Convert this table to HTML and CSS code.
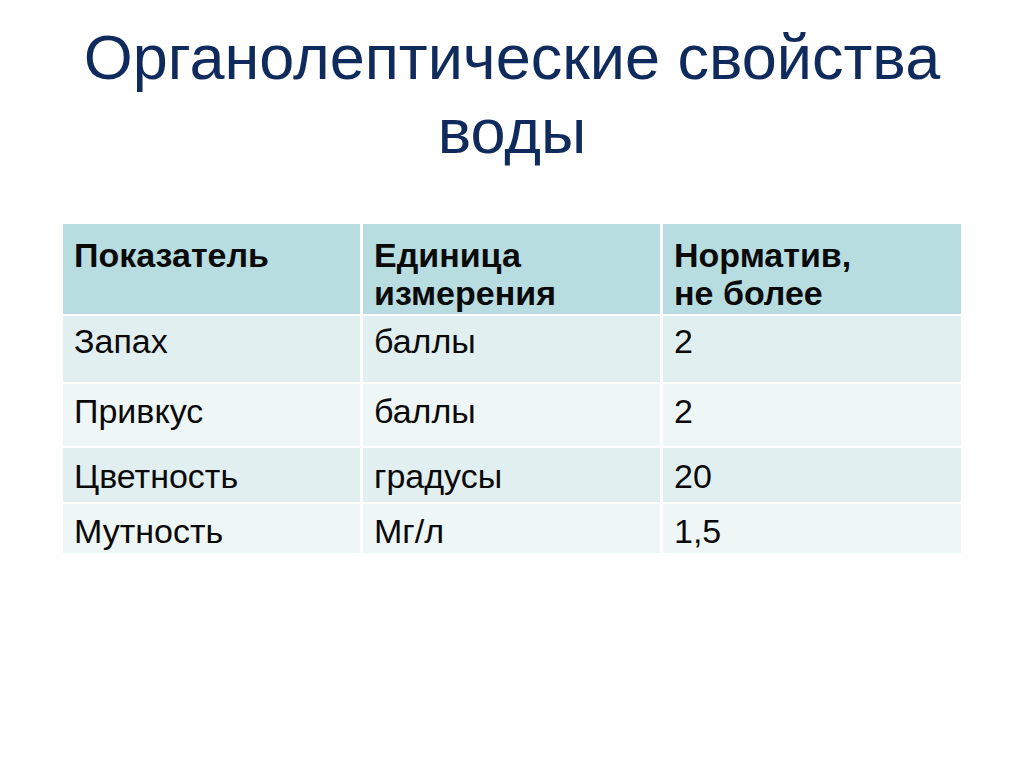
FILE: index.html
```html
<!DOCTYPE html>
<html lang="ru">
<head>
<meta charset="utf-8">
<title>Органолептические свойства воды</title>
<link rel="stylesheet" href="styles.css">
</head>
<body>
<div class="slide">
  <h1 class="title">Органолептические свойства<br>воды</h1>
  <div class="table">
    <div class="cell head">Показатель</div>
    <div class="cell head">Единица<br>измерения</div>
    <div class="cell head">Норматив,<br>не более</div>

    <div class="cell odd r1">Запах</div>
    <div class="cell odd r1">баллы</div>
    <div class="cell odd r1">2</div>

    <div class="cell even r2">Привкус</div>
    <div class="cell even r2">баллы</div>
    <div class="cell even r2">2</div>

    <div class="cell odd r3">Цветность</div>
    <div class="cell odd r3">градусы</div>
    <div class="cell odd r3">20</div>

    <div class="cell even r4">Мутность</div>
    <div class="cell even r4">Мг/л</div>
    <div class="cell even r4">1,5</div>
  </div>
</div>
</body>
</html>
```

FILE: styles.css
```css
html, body {
  margin: 0;
  padding: 0;
  background: #ffffff;
}

.slide {
  width: 1024px;
  height: 767px;
  font-family: "Liberation Sans", Arial, sans-serif;
  padding-top: 20px;
  box-sizing: border-box;
}

.title {
  margin: 0;
  text-align: center;
  font-weight: normal;
  font-size: 63px;
  line-height: 74px;
  color: #0f2a5c;
}

.table {
  display: grid;
  grid-template-columns: 297px 297px 298px;
  grid-template-rows: 90px 66px 62px 54px 49px;
  column-gap: 3px;
  row-gap: 2px;
  margin: 56px 0 0 63px;
  width: 898px;
}

.cell {
  font-size: 34px;
  line-height: 38px;
  color: #0a0a0a;
  padding-left: 11px;
  box-sizing: border-box;
}

.head {
  background: #b8dde0;
  font-weight: bold;
  padding-top: 12px;
}

.odd { background: #e2eff0; }
.even { background: #eff6f6; }

.r1 { padding-top: 6px; }
.r2 { padding-top: 8px; }
.r3 { padding-top: 9px; }
.r4 { padding-top: 8px; }
```
